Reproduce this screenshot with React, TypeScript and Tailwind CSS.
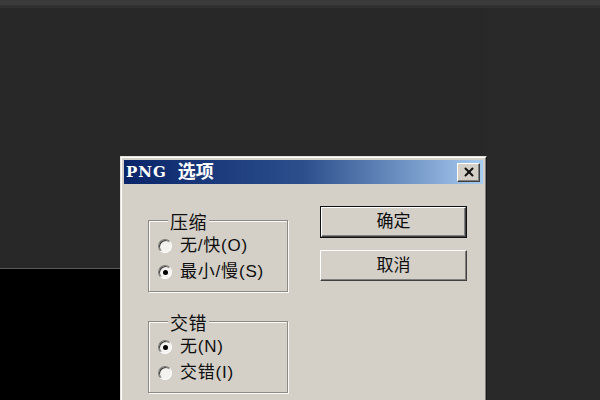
import { X } from "lucide-react";

const Radio = ({ checked, label }: { checked?: boolean; label: string }) => (
  <div className="flex items-center h-[26px] gap-[8px]">
    <span className="w-[14px] h-[14px] rounded-full bg-[#f4f3f0] border border-t-[#7c7a76] border-l-[#7c7a76] border-r-white border-b-white shadow-[inset_1px_1px_0_#3a3a3a] flex items-center justify-center">
      {checked && <span className="w-[5px] h-[5px] rounded-full bg-black" />}
    </span>
    <span className="text-[17px] leading-[18px] tracking-[0.8px] text-[#0e0e0e]">{label}</span>
  </div>
);

const GroupBox = ({ title, children }: { title: string; children: React.ReactNode }) => (
  <div className="relative w-[140px] h-[72px] border border-[#8c8a85] shadow-[inset_1px_1px_0_#fbfaf7,1px_1px_0_#fbfaf7] pt-[12px] pl-[9px]">
    <span className="absolute top-[-7px] left-[19px] px-[2px] bg-[#d4d0c8] text-[18px] leading-[18px] tracking-[0.5px] text-[#0e0e0e]">
      {title}
    </span>
    {children}
  </div>
);

const Dialog = () => (
  <div className="h-full border border-t-[#e4e1da] border-l-[#e4e1da] border-r-[#1a1a1a] border-b-[#1a1a1a] bg-[#d4d0c8]">
    <div className="h-full border border-t-white border-l-white border-r-[#808080] border-b-[#808080] p-[2px]">
      <div className="h-[24px] flex items-center justify-between pl-[2px] pr-[3px] bg-linear-to-r from-[#0a246a] via-[#2d4f8c] to-[#a8cbf0]">
        <span className="flex items-center gap-[11px] text-white font-bold leading-[18px]">
          <span className="text-[15px] tracking-[1px] font-['DejaVu_Serif',serif]">PNG</span>
          <span className="text-[18px]">选项</span>
        </span>
        <span className="w-[23px] h-[19px] bg-[#d4d0c8] border border-t-white border-l-white border-r-[#404040] border-b-[#404040] shadow-[inset_-1px_-1px_0_#808080] flex items-center justify-center">
          <X size={14} strokeWidth={3.4} color="#111" />
        </span>
      </div>
      <div className="flex">
        <div className="pl-[24px] pt-[36px]">
          <GroupBox title="压缩">
            <Radio label="无/快(O)" />
            <Radio checked label="最小/慢(S)" />
          </GroupBox>
          <div className="mt-[29px]">
            <GroupBox title="交错">
              <Radio checked label="无(N)" />
              <Radio label="交错(I)" />
            </GroupBox>
          </div>
        </div>
        <div className="ml-[32px] pt-[22px] flex flex-col">
          <div className="w-[147px] h-[32px] border border-[#111]">
            <div className="h-full border border-t-white border-l-white border-r-[#404040] border-b-[#404040] shadow-[inset_-1px_-1px_0_#808080] flex items-center justify-center text-[17px] leading-[18px] text-[#0e0e0e]">
              确定
            </div>
          </div>
          <div className="mt-[12px] w-[147px] h-[31px] border border-t-white border-l-white border-r-[#404040] border-b-[#404040] shadow-[inset_-1px_-1px_0_#808080] flex items-center justify-center text-[17px] leading-[18px] text-[#0e0e0e]">
            取消
          </div>
        </div>
      </div>
    </div>
  </div>
);

export default function App() {
  return (
    <div className="w-[600px] h-[400px] overflow-hidden flex flex-col bg-[#282828] font-['Liberation_Sans','Noto_Sans_CJK_SC',sans-serif]">
      <div className="h-[5px] bg-[#3b3b3b]" />
      <div className="h-[3px] bg-[#303030]" />
      <div className="flex flex-1 min-h-0">
        <div className="w-[120px] flex flex-col">
          <div className="h-[260px]" />
          <div className="h-px bg-[#5a5a5a]" />
          <div className="flex-1 bg-black" />
        </div>
        <div className="w-[367px] pt-[148px] h-[420px]">
          <Dialog />
        </div>
        <div className="flex-1 bg-[#292929]" />
      </div>
    </div>
  );
}
